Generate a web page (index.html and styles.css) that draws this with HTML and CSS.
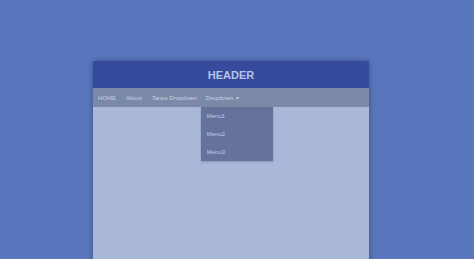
FILE: index.html
```html
<!DOCTYPE html>
<html>
<head>
<meta charset="utf-8">
<link rel="stylesheet" href="styles.css">
</head>
<body>
<div class="panel">
  <header class="header">HEADER</header>
  <nav class="nav">
    <ul class="menu">
      <li class="item">HOME</li>
      <li class="item">About</li>
      <li class="item">Tanps Dropdown</li>
      <li class="item has-drop">Dropdown <span class="caret">▾</span>
        <ul class="drop">
          <li class="drop-item">Menu1</li>
          <li class="drop-item">Menu2</li>
          <li class="drop-item">Menu3</li>
        </ul>
      </li>
    </ul>
  </nav>
  <main class="content"></main>
</div>
</body>
</html>
```
FILE: styles.css
```css
html, body {
  margin: 0;
  padding: 0;
  height: 100%;
  overflow: hidden;
}
body {
  background: #5a77bd;
  font-family: "Liberation Sans", Arial, sans-serif;
}
.panel {
  margin: 61px 0 0 93px;
  width: 276px;
  height: 220px;
  display: flex;
  flex-direction: column;
  box-shadow: 0 0 6px rgba(20, 30, 70, 0.45);
}
.header {
  height: 27px;
  background: #364b9b;
  color: #b7c3ec;
  font-weight: bold;
  font-size: 11px;
  display: flex;
  align-items: center;
  justify-content: center;
}
.nav {
  height: 19px;
  background: #7b89a9;
}
.menu {
  list-style: none;
  margin: 0;
  padding: 0;
  display: flex;
  height: 100%;
}
.item {
  position: relative;
  padding: 0 5px;
  font-size: 6px;
  color: #c9d0e4;
  display: flex;
  align-items: center;
  white-space: nowrap;
}
.has-drop {
  padding-left: 4px;
}
.caret {
  margin-left: 3px;
  font-size: 6px;
}
.drop {
  position: absolute;
  top: 19px;
  left: -1px;
  width: 72px;
  margin: 0;
  padding: 0;
  list-style: none;
  background: #65739a;
  box-shadow: 0 1px 2px rgba(30, 40, 80, 0.25);
}
.drop-item {
  height: 18px;
  line-height: 18px;
  padding-left: 6px;
  font-size: 6px;
  color: #c3cbe3;
}
.content {
  flex: 1;
  background: #a9b7d9;
}
```
